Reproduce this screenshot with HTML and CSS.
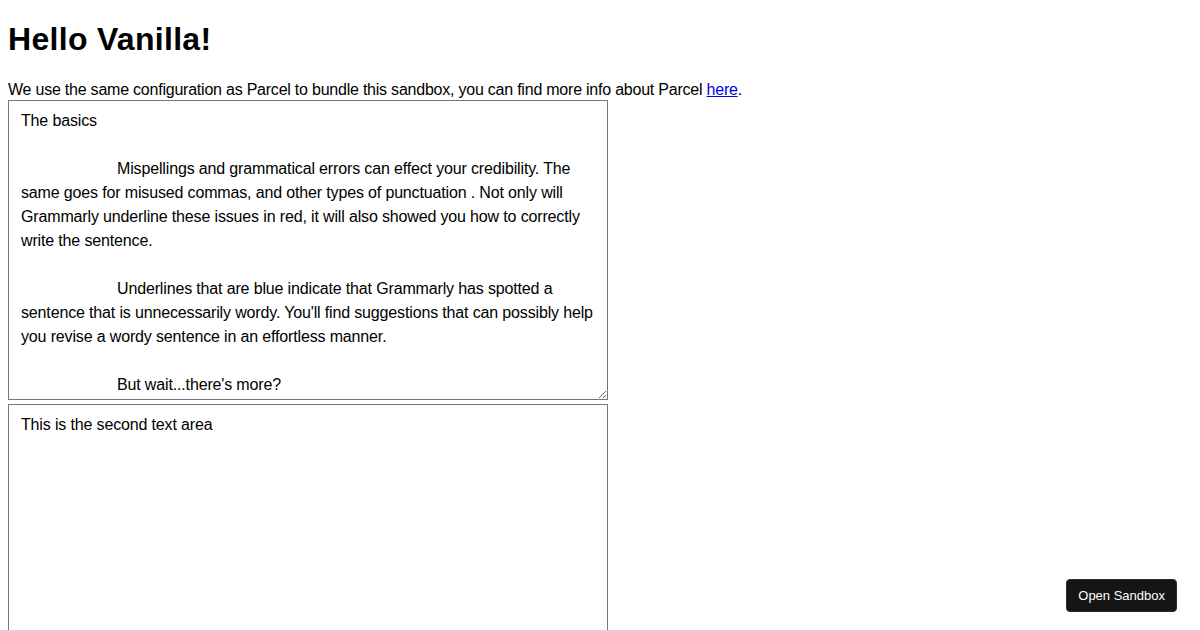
FILE: index.html
```html
<!DOCTYPE html>
<html>
<head>
<meta charset="UTF-8">
<title>Parcel Sandbox</title>
<link rel="stylesheet" href="styles.css">
</head>
<body>
<div id="app">
<h1 class="title">Hello Vanilla!</h1>
<div class="intro">We use the same configuration as Parcel to bundle this sandbox, you can find more info about Parcel <a href="#">here</a>.</div>
</div>
<div class="editors">
<textarea class="editor">The basics

&#9;Mispellings and grammatical errors can effect your credibility. The same goes for misused commas, and other types of punctuation . Not only will Grammarly underline these issues in red, it will also showed you how to correctly write the sentence.

&#9;Underlines that are blue indicate that Grammarly has spotted a sentence that is unnecessarily wordy. You'll find suggestions that can possibly help you revise a wordy sentence in an effortless manner.

&#9;But wait...there's more?

&#9;Grammarly Premium can give you very helpful feedback on your writing. Passive voice can be fixed by Grammarly, and it can handle classical word-choice mistakes.</textarea>
<textarea class="editor">This is the second text area</textarea>
</div>
<a class="open-sandbox" href="#">Open Sandbox</a>
</body>
</html>
```

FILE: styles.css
```css
html {
  margin: 0;
  padding: 0;
}

body {
  margin: 0 8px 8px 8px;
  font-family: "Liberation Sans", Arial, sans-serif;
  font-size: 16px;
  letter-spacing: -0.225px;
  color: #000;
  background: #fff;
}

.title {
  font-size: 32px;
  font-weight: bold;
  letter-spacing: 0.3px;
  line-height: 36.8px;
  margin: 21.44px 0 23px 0;
}

.intro {
  line-height: 18.4px;
}

.intro a {
  color: #0000ee;
}

.editors {
  display: flex;
  flex-direction: column;
  align-items: flex-start;
  gap: 4px;
  margin-top: 0.5px;
}

.editor {
  display: block;
  box-sizing: border-box;
  width: 600px;
  height: 300px;
  margin: 0;
  padding: 8px 12px 6px 12px;
  border: 1px solid #767676;
  font-family: "Liberation Sans", Arial, sans-serif;
  font-size: 16px;
  letter-spacing: -0.15px;
  line-height: 24px;
  color: #000;
  background: #fff;
  tab-size: 96px;
  overflow: hidden;
}

.open-sandbox {
  position: fixed;
  right: 23px;
  bottom: 18px;
  background: #151515;
  color: #fff;
  font-family: "Liberation Sans", Arial, sans-serif;
  font-size: 13px;
  letter-spacing: 0;
  line-height: 15.4px;
  text-decoration: none;
  padding: 8px 11px;
  border-radius: 4px;
  border: 1px solid #2b2b2b;
}
```
